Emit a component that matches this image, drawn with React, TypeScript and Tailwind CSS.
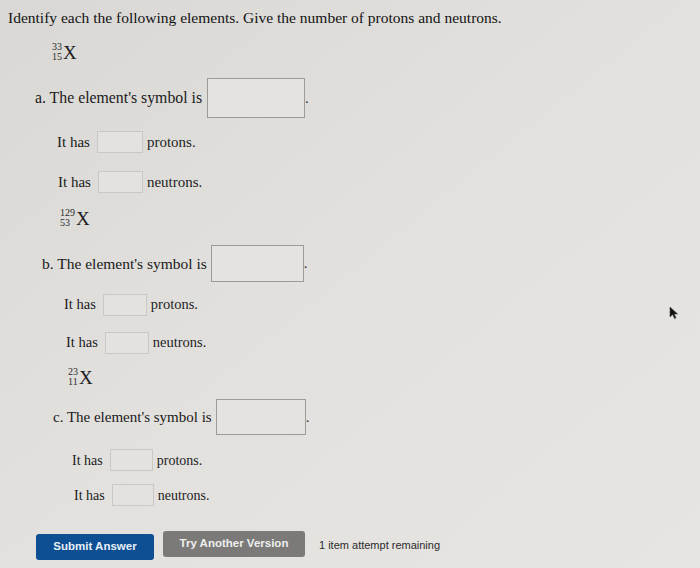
import React from "react";

const serif = { fontFamily: '"Liberation Serif", "Times New Roman", serif' };

function Iso({ a, z, pl, mt }: { a: string; z: string; pl: string; mt: string }) {
  return (
    <div className={`flex h-[24px] items-center ${pl} ${mt}`}>
      <div className="flex flex-col items-start text-[10px] leading-[10px] text-[#2a2a2a]">
        <span>{a}</span>
        <span>{z}</span>
      </div>
      <span className="ml-[1px] text-[19px] leading-none text-[#1c1c1c]">X</span>
    </div>
  );
}

function SymbolRow({ label, pl, mt, h, boxW, gap, fs }: { label: string; pl: string; mt: string; h: string; boxW: string; gap: string; fs: string }) {
  return (
    <div className={`flex ${h} items-center ${pl} ${mt}`}>
      <span className={`${fs} text-[#1a1a1a]`}>{label}</span>
      <div className={`${gap} ${boxW} h-full border border-[#9c9b98] bg-[#e4e3e0]`} />
      <span className="text-[15px] text-[#333]">.</span>
    </div>
  );
}

function HasRow({ word, pl, mt, boxW, fs }: { word: string; pl: string; mt: string; boxW: string; fs: string }) {
  return (
    <div className={`flex h-[22px] items-center ${pl} ${mt}`}>
      <span className={`${fs} text-[#1a1a1a]`}>It has</span>
      <div className={`ml-[7px] ${boxW} h-full border border-[#c9c8c5] bg-[#e3e2df]`} />
      <span className={`ml-[4px] ${fs} text-[#1e1e1e]`}>{word}</span>
    </div>
  );
}

export default function App() {
  return (
    <div
      className="relative h-[568px] w-[700px] overflow-hidden bg-gradient-to-br from-[#d9d8d5] via-[#e2e1de] to-[#e6e5e2]"
      style={serif}
    >
      <div className="flex flex-col">
        <div className="mt-[8px] flex h-[20px] items-center pl-[8px]">
          <span className="text-[15.5px] text-[#131313]">
            Identify each the following elements. Give the number of protons and neutrons.
          </span>
        </div>

        <Iso a="33" z="15" pl="pl-[52px]" mt="mt-[12px]" />
        <SymbolRow label="a. The element's symbol is" fs="text-[15.8px]" pl="pl-[35px]" mt="mt-[14px]" h="h-[40px]" boxW="w-[98px]" gap="ml-[5px]" />
        <HasRow word="protons." fs="text-[15px]" pl="pl-[57px]" mt="mt-[13px]" boxW="w-[46px]" />
        <HasRow word="neutrons." fs="text-[15px]" pl="pl-[58px]" mt="mt-[18px]" boxW="w-[45px]" />

        <Iso a="129" z="53" pl="pl-[60px]" mt="mt-[13px]" />
        <SymbolRow label="b. The element's symbol is" fs="text-[15.5px]" pl="pl-[42px]" mt="mt-[15px]" h="h-[37px]" boxW="w-[93px]" gap="ml-[4px]" />
        <HasRow word="protons." fs="text-[14.5px]" pl="pl-[64px]" mt="mt-[12px]" boxW="w-[44px]" />
        <HasRow word="neutrons." fs="text-[14.5px]" pl="pl-[66px]" mt="mt-[16px]" boxW="w-[44px]" />

        <Iso a="23" z="11" pl="pl-[68px]" mt="mt-[11px]" />
        <SymbolRow label="c. The element's symbol is" fs="text-[15px]" pl="pl-[53px]" mt="mt-[10px]" h="h-[36px]" boxW="w-[90px]" gap="ml-[4px]" />
        <HasRow word="protons." fs="text-[14px]" pl="pl-[72px]" mt="mt-[14px]" boxW="w-[43px]" />
        <HasRow word="neutrons." fs="text-[14px]" pl="pl-[74px]" mt="mt-[13px]" boxW="w-[42px]" />

        <div
          className="mt-[24px] flex h-[30px] items-center pl-[36px]"
          style={{ fontFamily: '"Liberation Sans", Arial, sans-serif' }}
        >
          <div className="mt-[4px] flex h-[26px] w-[118px] items-center justify-center rounded-[3px] bg-[#0d4f92] text-[11.5px] font-bold text-[#e8eef6]">
            Submit Answer
          </div>
          <div className="-mt-[2px] ml-[9px] flex h-[26px] w-[142px] items-center justify-center rounded-[3px] bg-[#7b7a78] text-[11.5px] font-bold text-[#eeeeee]">
            Try Another Version
          </div>
          <span className="ml-[14px] text-[11px] text-[#2c2c2c]">1 item attempt remaining</span>
        </div>
      </div>

      <svg className="absolute left-[668px] top-[306px]" width="12" height="14" viewBox="0 0 12 14">
        <path d="M2 1 L2 11 L4.6 8.6 L6.6 12.6 L8 12 L6.2 8 L9.6 8 Z" fill="#111" stroke="#444" strokeWidth="0.6" />
      </svg>
    </div>
  );
}
